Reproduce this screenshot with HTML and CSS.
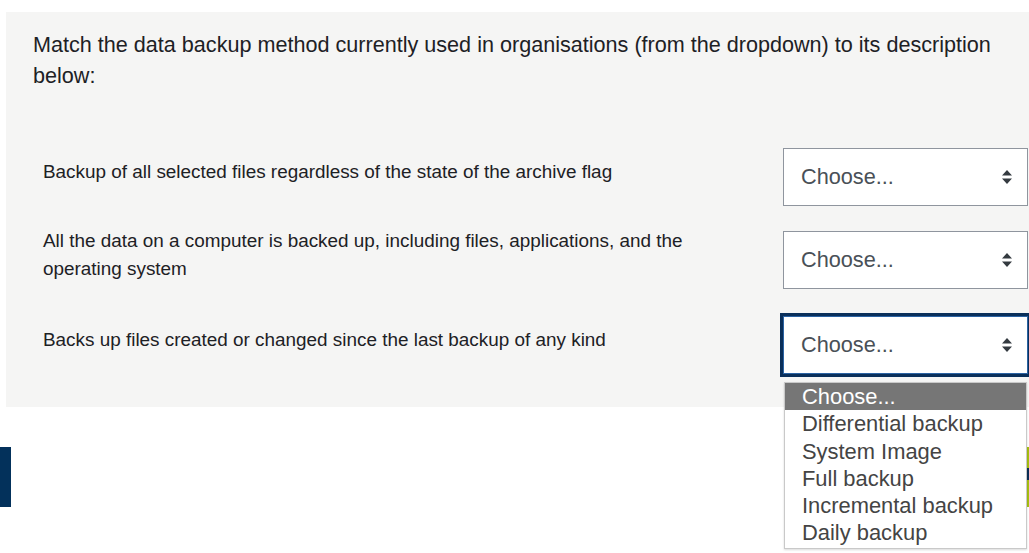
FILE: index.html
```html
<!DOCTYPE html>
<html>
<head>
<meta charset="utf-8">
<link rel="stylesheet" href="styles.css">
</head>
<body>
<div class="question">
  <p class="qtext">Match the data backup method currently used in organisations (from the dropdown) to its description below:</p>
  <div class="rows">
    <div class="row r1">
      <div class="label">Backup of all selected files regardless of the state of the archive flag</div>
      <div class="select"><span>Choose...</span><svg class="arrows" viewBox="0 0 10 14" width="10" height="14"><path d="M5 0 L10 5.5 L0 5.5 Z M0 8.5 L10 8.5 L5 14 Z" fill="#343a40"/></svg></div>
    </div>
    <div class="row r2">
      <div class="label">All the data on a computer is backed up, including files, applications, and the operating system</div>
      <div class="select"><span>Choose...</span><svg class="arrows" viewBox="0 0 10 14" width="10" height="14"><path d="M5 0 L10 5.5 L0 5.5 Z M0 8.5 L10 8.5 L5 14 Z" fill="#343a40"/></svg></div>
    </div>
    <div class="row r3">
      <div class="label">Backs up files created or changed since the last backup of any kind</div>
      <div class="select focused"><span>Choose...</span><svg class="arrows" viewBox="0 0 10 14" width="10" height="14"><path d="M5 0 L10 5.5 L0 5.5 Z M0 8.5 L10 8.5 L5 14 Z" fill="#343a40"/></svg>
        <ul class="menu">
          <li class="active">Choose...</li>
          <li>Differential backup</li>
          <li>System Image</li>
          <li>Full backup</li>
          <li>Incremental backup</li>
          <li>Daily backup</li>
        </ul>
      </div>
    </div>
  </div>
</div>
<div class="below">
  <div class="navbtn"></div>
  <div class="nextbtn"><span></span></div>
</div>
</body>
</html>
```
FILE: styles.css
```css
html, body {
  margin: 0;
  padding: 0;
  background: #fff;
  overflow: hidden;
}
body {
  font-family: "Liberation Sans", Arial, sans-serif;
  color: #1d2125;
  width: 1029px;
  height: 553px;
}
.question {
  margin: 12px 0 0 6px;
  background: #f5f5f4;
  padding: 17px 0 0 27px;
  height: 395px;
  box-sizing: border-box;
}
.qtext {
  margin: 0;
  font-size: 21.6px;
  line-height: 31px;
  padding-right: 30px;
}
.rows {
  margin-top: 57px;
  display: flex;
  flex-direction: column;
}
.row {
  display: flex;
  align-items: flex-start;
}
.r1 { height: 83px; }
.r2 { height: 85px; }
.r3 { height: 58px; }
.label {
  flex: 1;
  align-self: center;
  padding-left: 10px;
  padding-bottom: 11px;
  font-size: 18.9px;
  line-height: 28px;
  padding-right: 95px;
}
.r1 .label, .r2 .label { margin-top: -25px; }
.r2 .label { margin-top: -27px; }
.select {
  position: relative;
  width: 245px;
  height: 58px;
  box-sizing: border-box;
  border: 1px solid #8f959e;
  background: #fff;
  display: flex;
  align-items: center;
  padding: 0 15px 0 17px;
  font-size: 21.7px;
  color: #495057;
  margin-right: 1px;
}
.select span { flex: 1; }
.arrows { display: block; }
.select.focused {
  border: 1px solid #2b63a3;
  box-shadow: 0 0 0 3px #0a2f5a;
}
.menu {
  position: absolute;
  left: 0;
  top: 65px;
  width: 243px;
  margin: 0;
  padding: 0 0 1px 0;
  list-style: none;
  background: #fff;
  border: 1px solid #c9c9c9;
  box-shadow: 0 1px 2px rgba(0,0,0,0.15);
  box-sizing: border-box;
  z-index: 5;
}
.menu li {
  font-size: 21.9px;
  line-height: 27.3px;
  padding-left: 17px;
  color: #444;
}
.menu li.active {
  background: #767676;
  color: #fff;
}
.below {
  position: relative;
  height: 146px;
}
.navbtn {
  position: absolute;
  left: 0;
  top: 40px;
  width: 11px;
  height: 60px;
  background: #03315b;
}
.nextbtn {
  position: absolute;
  left: 1027px;
  top: 40px;
  width: 10px;
  height: 60px;
  background: #a6bf10;
}
.nextbtn span {
  position: absolute;
  left: 0;
  top: 21px;
  width: 4px;
  height: 12px;
  background: #0b2f57;
}
```
